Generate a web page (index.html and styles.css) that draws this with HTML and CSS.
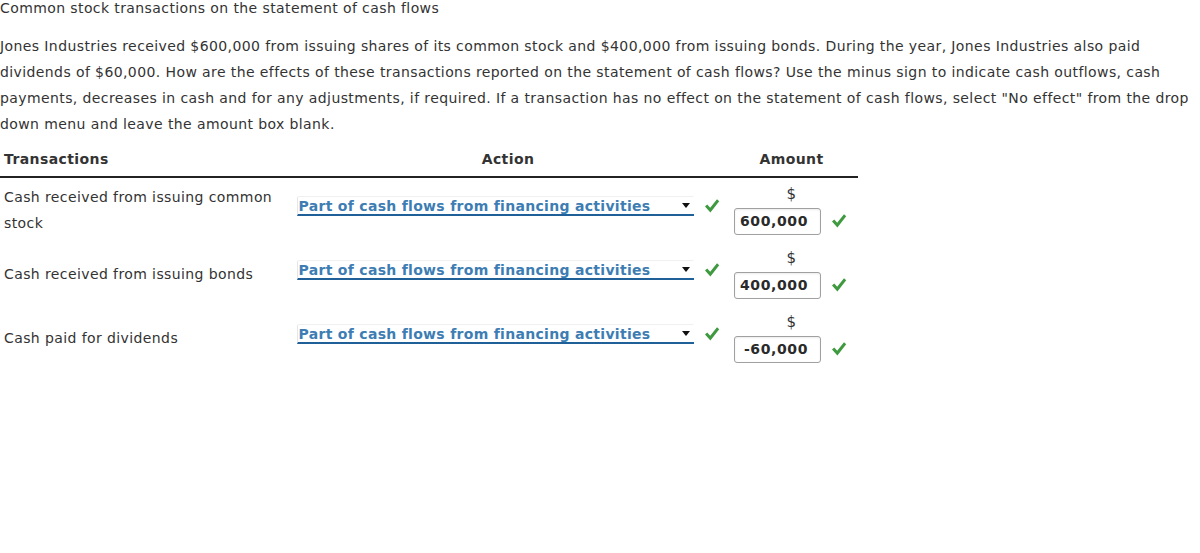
FILE: index.html
```html
<!DOCTYPE html>
<html>
<head>
<meta charset="utf-8">
<link rel="stylesheet" href="styles.css">
</head>
<body>
<h1 class="title">Common stock transactions on the statement of cash flows</h1>
<p class="question">Jones Industries received $600,000 from issuing shares of its common stock and $400,000 from issuing bonds. During the year, Jones Industries also paid dividends of $60,000. How are the effects of these transactions reported on the statement of cash flows? Use the minus sign to indicate cash outflows, cash payments, decreases in cash and for any adjustments, if required. If a transaction has no effect on the statement of cash flows, select "No effect" from the drop down menu and leave the amount box blank.</p>

<div class="table">
  <div class="row head">
    <div class="c-label">Transactions</div>
    <div class="c-action">Action</div>
    <div class="c-amount">Amount</div>
  </div>

  <div class="row">
    <div class="c-label">Cash received from issuing common stock</div>
    <div class="c-action">
      <span class="select"><span class="sel-text">Part of cash flows from financing activities</span><span class="arrow"></span></span>
      <svg class="check" viewBox="0 0 16 16"><path d="M1 8.6 L3.2 6.6 L6.2 9.8 L13 1.2 L15.2 3.2 L6.4 14.4 Z" /></svg>
    </div>
    <div class="c-amount">
      <div class="dollar">$</div>
      <div class="amt-line">
        <span class="amt-box">600,000</span>
        <svg class="check amt-check" viewBox="0 0 16 16"><path d="M1 8.6 L3.2 6.6 L6.2 9.8 L13 1.2 L15.2 3.2 L6.4 14.4 Z" /></svg>
      </div>
    </div>
  </div>

  <div class="row">
    <div class="c-label">Cash received from issuing bonds</div>
    <div class="c-action">
      <span class="select"><span class="sel-text">Part of cash flows from financing activities</span><span class="arrow"></span></span>
      <svg class="check" viewBox="0 0 16 16"><path d="M1 8.6 L3.2 6.6 L6.2 9.8 L13 1.2 L15.2 3.2 L6.4 14.4 Z" /></svg>
    </div>
    <div class="c-amount">
      <div class="dollar">$</div>
      <div class="amt-line">
        <span class="amt-box">400,000</span>
        <svg class="check amt-check" viewBox="0 0 16 16"><path d="M1 8.6 L3.2 6.6 L6.2 9.8 L13 1.2 L15.2 3.2 L6.4 14.4 Z" /></svg>
      </div>
    </div>
  </div>

  <div class="row">
    <div class="c-label">Cash paid for dividends</div>
    <div class="c-action">
      <span class="select"><span class="sel-text">Part of cash flows from financing activities</span><span class="arrow"></span></span>
      <svg class="check" viewBox="0 0 16 16"><path d="M1 8.6 L3.2 6.6 L6.2 9.8 L13 1.2 L15.2 3.2 L6.4 14.4 Z" /></svg>
    </div>
    <div class="c-amount">
      <div class="dollar">$</div>
      <div class="amt-line">
        <span class="amt-box">-60,000</span>
        <svg class="check amt-check" viewBox="0 0 16 16"><path d="M1 8.6 L3.2 6.6 L6.2 9.8 L13 1.2 L15.2 3.2 L6.4 14.4 Z" /></svg>
      </div>
    </div>
  </div>
</div>
</body>
</html>
```

FILE: styles.css
```css
html, body {
  margin: 0;
  padding: 0;
  background: #fff;
}
body {
  font-family: "DejaVu Sans", Verdana, sans-serif;
  font-size: 14px;
  letter-spacing: 0.4px;
  color: #333;
}
.title {
  margin: 0;
  font-size: 14px;
  font-weight: normal;
  line-height: 16px;
  color: #333;
}
.question {
  margin: 17px 0 0 0;
  line-height: 26px;
}
.table {
  width: 858px;
  margin-top: 11px;
}
.row {
  display: grid;
  grid-template-columns: 291px 434px 133px;
  align-items: center;
  height: 64px;
}
.row.head {
  font-weight: bold;
  letter-spacing: 0.4px;
  height: auto;
  line-height: 22px;
  padding-bottom: 6px;
  border-bottom: 2px solid #222;
}
.head .c-action, .head .c-amount {
  text-align: center;
}
.c-label {
  padding-left: 4px;
  line-height: 26px;
  padding-right: 16px;
}
.head .c-label { line-height: 22px; }
.c-action {
  display: flex;
  align-items: center;
  justify-content: center;
  gap: 10px;
  margin-bottom: 8px;
}
.row.head .c-action { margin-bottom: 0; display: block; }
.select {
  display: flex;
  align-items: center;
  width: 397px;
  border-bottom: 2px solid #1f6098;
  border-left: 1px solid #e6e6e6;
  border-top: 1px solid #f0f0f0;
  border-radius: 2px 2px 0 0;
  box-sizing: border-box;
  height: 20px;
}
.sel-text {
  flex: 1;
  color: #3d7db3;
  font-weight: bold;
  letter-spacing: 0.3px;
  line-height: 18px;
  padding-left: 1px;
}
.arrow {
  width: 0;
  height: 0;
  border-left: 4px solid transparent;
  border-right: 4px solid transparent;
  border-top: 5px solid #111;
  margin-right: 4px;
}
.check {
  width: 16px;
  height: 16px;
  flex: none;
}
.check path {
  fill: #3f9a3f;
}
.amt-check {
  margin-right: 2px;
}
.c-amount {
  display: flex;
  flex-direction: column;
  align-items: center;
}
.dollar {
  line-height: 16px;
  font-size: 15px;
  margin-bottom: 6px;
}
.amt-line {
  display: flex;
  align-items: center;
  gap: 10px;
}
.amt-box {
  display: block;
  box-sizing: border-box;
  width: 87px;
  height: 27px;
  border: 1px solid #a0a0a0;
  border-radius: 3px;
  box-shadow: inset 0 1px 2px rgba(0,0,0,0.08);
  font-weight: bold;
  letter-spacing: 0.6px;
  text-align: right;
  padding-right: 12px;
  line-height: 25px;
  color: #2a2a2a;
  white-space: nowrap;
}
```
